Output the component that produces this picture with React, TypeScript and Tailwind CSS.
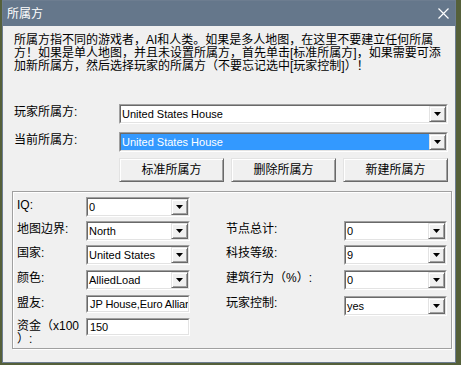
import React from 'react'

const font = "font-['Liberation_Sans','Noto_Sans_CJK_SC',sans-serif]"

const DropButton = () => (
  <div className="flex w-[17px] shrink-0 items-center justify-center border border-t-[#e3e3e3] border-l-[#e3e3e3] border-b-[#696969] border-r-[#696969] bg-[#f0f0f0] shadow-[inset_1px_1px_0_#fff,inset_-1px_-1px_0_#a0a0a0]">
    <svg width="7" height="4" viewBox="0 0 7 4">
      <path d="M0 0H7L3.5 4Z" fill="#000" />
    </svg>
  </div>
)

interface ComboProps {
  value: string
  width: string
  active?: boolean
}

const Combo = ({ value, width, active }: ComboProps) => (
  <div className={`flex h-[20px] shrink-0 border border-t-[#a0a0a0] border-l-[#a0a0a0] border-b-white border-r-white ${width}`}>
    <div className="flex min-w-0 flex-1 border border-t-[#696969] border-l-[#696969] border-b-[#e3e3e3] border-r-[#e3e3e3] bg-white">
      <div
        className={`min-w-0 flex-1 overflow-hidden whitespace-nowrap pl-[1px] text-[11px] leading-[16px] ${
          active ? 'bg-[#3399ff] text-white' : 'text-black'
        }`}
      >
        {value}
      </div>
      <DropButton />
    </div>
  </div>
)

const TextBox = ({ value }: { value: string }) => (
  <div className="flex h-[18px] w-[104px] shrink-0 border border-t-[#a0a0a0] border-l-[#a0a0a0] border-b-white border-r-white">
    <div className="min-w-0 flex-1 overflow-hidden whitespace-nowrap border border-t-[#696969] border-l-[#696969] border-b-[#e3e3e3] border-r-[#e3e3e3] bg-white pl-[2px] text-[11px] leading-[14px] tracking-[-0.1px] text-black">
      {value}
    </div>
  </div>
)

const Btn = ({ children }: { children: React.ReactNode }) => (
  <button className="h-[24px] w-[105px] border border-t-[#e3e3e3] border-l-[#e3e3e3] border-b-[#696969] border-r-[#696969] bg-[#f0f0f0] text-[12px] leading-[16px] text-black shadow-[inset_1px_1px_0_#fff,inset_-1px_-1px_0_#a0a0a0]">
    {children}
  </button>
)

const Label = ({ children, width }: { children: React.ReactNode; width: string }) => (
  <div className={`shrink-0 text-[12px] leading-[16px] text-black ${width}`}>{children}</div>
)

export default function App() {
  return (
    <div className={`h-[365px] w-[461px] overflow-hidden bg-[#55603a] ${font}`}>
      <div className="ml-[2px] flex h-[363px] w-[454px] flex-col border border-[#6d7d90]">
        {/* title bar */}
        <div className="flex h-[25px] items-center justify-between bg-[#65778b] pl-[4px] pr-[6px] text-[12px] text-white">
          <span>所属方</span>
          <svg width="11" height="11" viewBox="0 0 11 11">
            <path d="M0.5 0.5L10.5 10.5M10.5 0.5L0.5 10.5" stroke="#fff" strokeWidth="1.2" />
          </svg>
        </div>

        <div className="flex-1 bg-[#f0f0f0] pt-[8px]">
          <div className="ml-[11px] text-[12px] leading-[13px] text-black">
            <div>所属方指不同的游戏者，AI和人类。如果是多人地图，在这里不要建立任何所属</div>
            <div>方！如果是单人地图，并且未设置所属方，首先单击[标准所属方]，如果需要可添</div>
            <div>加新所属方，然后选择玩家的所属方（不要忘记选中[玩家控制]）！</div>
          </div>

          <div className="ml-[11px] mt-[31px] flex items-start">
            <Label width="w-[105px]">玩家所属方:</Label>
            <Combo value="United States House" width="w-[329px]" />
          </div>
          <div className="ml-[11px] mt-[8px] flex items-start">
            <Label width="w-[105px]">当前所属方:</Label>
            <Combo value="United States House" width="w-[329px]" active />
          </div>
          <div className="ml-[116px] mt-[6px] flex gap-[7px]">
            <Btn>标准所属方</Btn>
            <Btn>删除所属方</Btn>
            <Btn>新建所属方</Btn>
          </div>

          {/* group box */}
          <div className="ml-[9px] mt-[9px] h-[158px] w-[440px] border border-[#a0a0a0] pl-[4px] pt-[5px] shadow-[inset_1px_1px_0_#fff,1px_1px_0_#fff]">
            <div className="flex items-start">
              <Label width="w-[69px]">IQ:</Label>
              <Combo value="0" width="w-[104px]" />
            </div>
            <div className="mt-[4px] flex items-start">
              <Label width="w-[69px]">地图边界:</Label>
              <Combo value="North" width="w-[104px]" />
              <Label width="ml-[36px] w-[118px]">节点总计:</Label>
              <Combo value="0" width="w-[103px]" />
            </div>
            <div className="mt-[4px] flex items-start">
              <Label width="w-[69px]">国家:</Label>
              <Combo value="United States" width="w-[104px]" />
              <Label width="ml-[36px] w-[118px]">科技等级:</Label>
              <Combo value="9" width="w-[103px]" />
            </div>
            <div className="mt-[5px] flex items-start">
              <Label width="w-[69px]">颜色:</Label>
              <Combo value="AlliedLoad" width="w-[104px]" />
              <Label width="ml-[36px] w-[118px]">建筑行为（%）:</Label>
              <Combo value="0" width="w-[103px]" />
            </div>
            <div className="mt-[5px] flex h-[20px] items-start">
              <Label width="w-[69px]">盟友:</Label>
              <TextBox value="JP House,Euro Allian" />
              <Label width="ml-[36px] w-[118px]">玩家控制:</Label>
              <div className="mt-[1px]">
                <Combo value="yes" width="w-[103px]" />
              </div>
            </div>
            <div className="mt-[3px] flex items-start">
              <div className="w-[69px] shrink-0 pt-[2px] text-[12px] leading-[13px] text-black">
                <div>资金（x100</div>
                <div>）:</div>
              </div>
              <TextBox value="150" />
            </div>
          </div>
        </div>
      </div>
    </div>
  )
}
